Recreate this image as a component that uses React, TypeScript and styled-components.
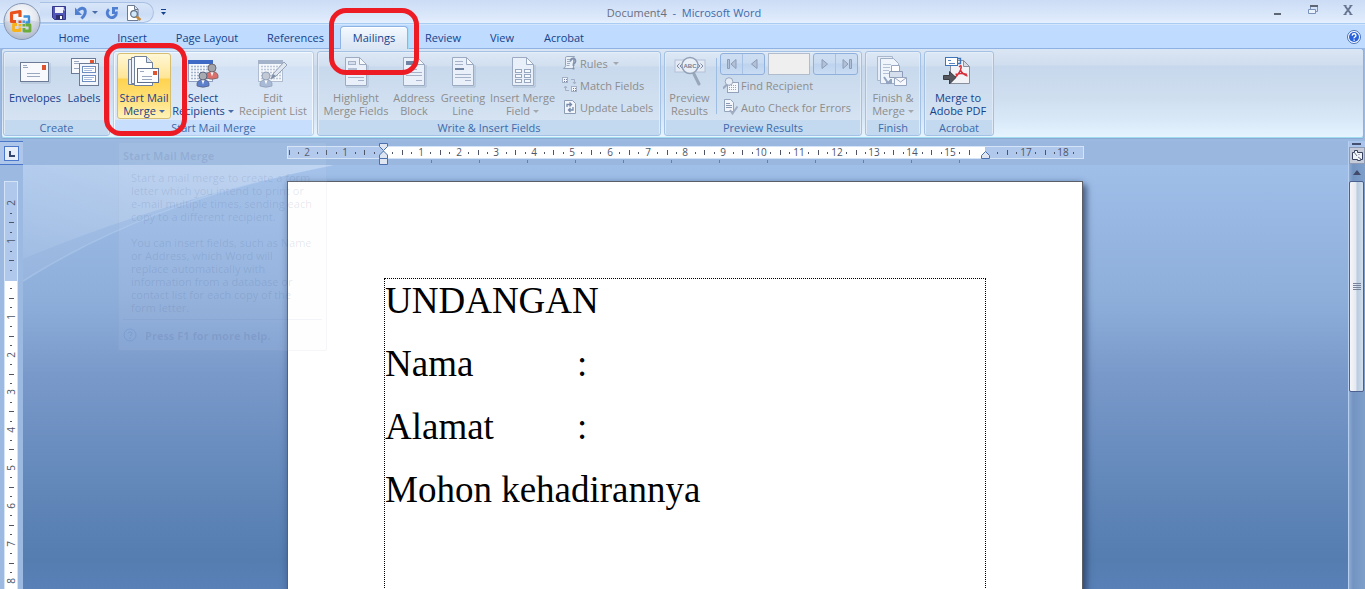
import React from "react";
import styled, { createGlobalStyle, css } from "styled-components";

const UI_FONT = `"Open Sans", "Noto Sans", sans-serif`;

const GlobalStyle = createGlobalStyle`
  *, *::before, *::after { box-sizing: border-box; }
  body { margin: 0; font-family: ${UI_FONT}; font-size: 11px; color: #15428b; overflow: hidden; }
  button, input { font: inherit; color: inherit; }
  button { background: none; border: 0; padding: 0; white-space: nowrap; }
  svg { display: block; }
`;

/* ---------- window frame ---------- */

const Window = styled.div`
  position: relative;
  display: flex;
  flex-direction: column;
  height: 100vh;
  background: #9bb9e1;
`;

const TitleBar = styled.header`
  display: flex;
  align-items: flex-start;
  height: 25px;
  flex: none;
  padding-left: 40px;
  background: linear-gradient(#ccdcf5 0, #d3e2f8 8px, #dfebfc 20px, #e6f1fe 23px);
  border-bottom: 1px solid #d3e6fb;
  box-shadow: inset 0 -1px 0 #a9ccf2;
`;

const QuickAccess = styled.div`
  display: flex;
  align-items: center;
  gap: 6px;
  width: 114px;
  height: 21px;
  margin-top: 2px;
  padding: 0 11px;
  border: 1px solid #a9c1e4;
  border-left: 0;
  border-radius: 0 11px 11px 0;
  background: linear-gradient(#d9e6f9, #cbdcf5 60%, #dce9fb);
`;

const IconButton = styled.button`
  display: flex;
  align-items: center;
  justify-content: center;
`;

const CustomizeButton = styled(IconButton)`
  width: 20px;
  height: 24px;
`;

const Caption = styled.h1`
  flex: 1;
  margin: 0;
  padding-right: 73px;
  text-align: center;
  font-size: 11px;
  font-weight: 400;
  line-height: 26px;
  white-space: pre;
  color: #3e6aaa;
`;

const DocumentName = styled.span`
  color: #696f7d;
`;

const WindowButtons = styled.div`
  display: flex;
  gap: 14px;
  margin: 1px 7px 0 0;
`;

const WindowButton = styled(IconButton)`
  width: 21px;
  height: 18px;
`;

const OfficeButton = styled(IconButton)`
  position: absolute;
  left: 3px;
  top: 3px;
  width: 38px;
  height: 38px;
`;

/* ---------- ribbon tabs ---------- */

const TabRow = styled.nav`
  display: flex;
  align-items: flex-end;
  flex: none;
  height: 23px;
  padding-left: 45px;
  background: #bfdbff;
`;

const Tab = styled.button<{ $width: number; $active?: boolean }>`
  position: relative;
  width: ${(p) => p.$width}px;
  height: 23px;
  padding-top: 2px;
  line-height: 21px;
  text-align: center;
  ${(p) =>
    p.$active &&
    css`
      z-index: 2;
      &::before {
        content: "";
        position: absolute;
        inset: 1px 2px -1px 2px;
        border: 1px solid #8db2e3;
        border-bottom: 0;
        border-radius: 4px 4px 0 0;
        background: linear-gradient(#f4f9ff, #e3ecf7 60%, #dbe6f4);
        box-shadow: inset 0 1px 0 #fff, 1px 0 1px #9fdcf5;
      }
    `}
`;

const TabText = styled.span`
  position: relative;
`;

const HelpButton = styled(IconButton)`
  width: 16px;
  height: 23px;
  margin: 0 3px 0 auto;
`;

const Highlight = styled.span<{ $inset: string }>`
  position: absolute;
  z-index: 5;
  inset: ${(p) => p.$inset};
  border: 5px solid #ed1c24;
  border-radius: 17px;
  pointer-events: none;
`;

/* ---------- ribbon ---------- */

const Ribbon = styled.section`
  display: flex;
  flex: none;
  gap: 3px;
  height: 90px;
  margin: 0 1px;
  padding: 2px 1px;
  border: 1px solid #8db2e3;
  border-bottom-color: #9fdcee;
  border-radius: 3px;
  background: linear-gradient(#dbe6f4 0, #cfddee 16px, #c7d8ed 17px, #cfdeef 48px, #d9e9f8 72px, #e5f4fe 88px);
  box-shadow: 0 1px 0 #8aa9d4;
`;

const GroupBox = styled.section<{ $width: number; $hot?: boolean }>`
  display: flex;
  flex-direction: column;
  flex: none;
  width: ${(p) => p.$width}px;
  height: 85px;
  border: 1px solid ${(p) => (p.$hot ? "#b5cdec" : "#a2c1e4")};
  border-radius: 3px;
  box-shadow: inset 0 0 0 1px ${(p) => (p.$hot ? "#f2f8ff" : "rgba(235, 243, 252, 0.55)")};
  background: ${(p) =>
    p.$hot
      ? "linear-gradient(#e3ecf8 0, #dae6f5 14px, #d2e1f4 15px, #dde9f8 68px)"
      : "linear-gradient(#dde8f5 0, #d1dfef 14px, #c8d9ed 15px, #d5e3f2 68px)"};
`;

const GroupBody = styled.div`
  display: flex;
  flex: 1;
  padding: 1px 0 0 3px;
`;

const GroupTitle = styled.h2<{ $hot?: boolean }>`
  flex: none;
  height: 15px;
  margin: 0 1px;
  font-size: 11px;
  font-weight: 400;
  line-height: 15px;
  text-align: center;
  color: #3e6aaa;
  background: ${(p) => (p.$hot ? "#c7dffc" : "#c2d9f0")};
`;

const LargeButton = styled.button<{ $width: number; $active?: boolean }>`
  position: relative;
  display: flex;
  flex-direction: column;
  align-items: center;
  flex: none;
  width: ${(p) => p.$width}px;
  height: 66px;
  padding-top: 2px;
  border: 1px solid transparent;
  border-radius: 3px;
  line-height: 13px;
  color: #15428b;
  &:disabled { color: #8d8d8d; }
  ${(p) =>
    p.$active &&
    css`
      border-color: #d5bd71;
      background: linear-gradient(#fff7d6 0, #ffe696 24px, #ffd34e 25px, #ffe07a 46px, #fff3b8 64px);
    `}
`;

const LargeLabel = styled.span`
  margin-top: 3px;
  white-space: pre;
`;

const SmallColumn = styled.div<{ $inset?: number }>`
  display: flex;
  flex-direction: column;
  padding-left: ${(p) => p.$inset ?? 0}px;
`;

const SmallButton = styled.button`
  display: flex;
  align-items: center;
  gap: 2px;
  height: 22px;
  padding-bottom: 2px;
  &:disabled { color: #8d8d8d; }
`;

const Arrow = styled.span`
  display: inline-block;
  margin-left: 3px;
  vertical-align: 2px;
  border: 3px solid transparent;
  border-top-color: #4a6ca6;
  border-bottom: 0;
  button:disabled & { border-top-color: #a3a7ae; }
`;

const Divider = styled.div`
  width: 1px;
  height: 56px;
  margin: 5px 3px 0 5px;
  background: #9dbde2;
`;

const RecordBar = styled.div`
  display: flex;
  gap: 3px;
  height: 22px;
`;

const NavPair = styled.div`
  display: flex;
  width: 45px;
  height: 22px;
  border: 1px solid #8fb0dc;
  border-radius: 3px;
  background: linear-gradient(#cfdff2 0, #c9dbf1 9px, #bdd3ee 10px, #c9dcf3);
`;

const NavButton = styled(IconButton)`
  flex: 1;
  & + & { border-left: 1px solid #a8c2e4; }
`;

const RecordInput = styled.input`
  width: 42px;
  height: 22px;
  padding: 0 3px;
  border: 1px solid #b1bdcc;
  background: #efefef;
`;

/* ---------- work area ---------- */

const Workspace = styled.main`
  display: flex;
  flex: 1;
  min-height: 0;
  margin-top: 3px;
`;

const LeftRail = styled.div`
  display: flex;
  flex-direction: column;
  flex: none;
  width: 23px;
  background: #9bb9e1;
`;

const TabSelector = styled.button`
  display: flex;
  align-items: center;
  justify-content: center;
  flex: none;
  width: 24px;
  height: 24px;
  border: 1px solid #4b78ca;
  border-left: 0;
  background: #adc6ea;
`;

const VerticalRuler = styled.div`
  flex: 1;
  min-height: 0;
  margin: 16px 0 0 4px;
  overflow: hidden;
`;

const Center = styled.div`
  display: flex;
  flex-direction: column;
  flex: 1;
  min-width: 0;
`;

const RulerRow = styled.div`
  display: flex;
  justify-content: center;
  flex: none;
  height: 24px;
  background: #9ab8df;
`;

const Desk = styled.div`
  position: relative;
  display: flex;
  justify-content: center;
  flex: 1;
  min-height: 0;
  padding-right: 1px;
  overflow: hidden;
  background: linear-gradient(#9fbfe9 0, #8fafdb 130px, #7999ca 210px, #6489bb 310px, #557db0 395px, #5981b8 424px);
`;

const Swoosh = styled.svg`
  position: absolute;
  left: 0;
  top: 0;
`;

const Paper = styled.article`
  position: relative;
  width: 796px;
  height: 1124px;
  flex: none;
  margin-top: 16px;
  padding: 96px;
  border: 1px solid #5a5f68;
  background: #fff;
  box-shadow: 4px 4px 6px rgba(35, 55, 90, 0.65), -1px 0 6px rgba(35, 55, 90, 0.25);
`;

const TextArea = styled.div`
  height: 930px;
  border: 1px dotted #000;
`;

const Line = styled.p`
  margin: 0;
  height: 63px;
  font-family: "Liberation Serif", "Times New Roman", serif;
  font-size: 37px;
  line-height: 44px;
  color: #000;
  white-space: pre;
  tab-size: 192px;
`;

const RightRail = styled.div`
  display: flex;
  flex-direction: column;
  flex: none;
  width: 17px;
  border-left: 1px solid #b7d0f2;
  background: linear-gradient(90deg, #8daad2, #7394c1 4px, #7f9fcb);
`;

const SplitHandle = styled.div`
  flex: none;
  height: 6px;
  padding: 2px 3px;
  background: #a9c5ee;
  &::before { content: ""; display: block; width: 9px; height: 2px; background: #44506e; }
`;

const RulerToggle = styled(IconButton)`
  flex: none;
  height: 17px;
  border: 1px solid #8f9bb5;
  background: #c5cbd9;
`;

const ScrollUp = styled(IconButton)`
  flex: none;
  height: 17px;
`;

const ScrollThumb = styled.div`
  display: flex;
  align-items: center;
  justify-content: center;
  flex: none;
  width: 15px;
  height: 211px;
  border: 1px solid #4c5f91;
  border-radius: 2px;
  background: linear-gradient(90deg, #f6f6fa, #e4e8f0 6px, #b9cbe0 7px, #d3e0ee);
`;

/* ---------- fading screen tip ---------- */

const ScreenTip = styled.aside`
  position: absolute;
  z-index: 3;
  left: 118px;
  top: 142px;
  width: 209px;
  height: 209px;
  padding: 6px 4px 0 4px;
  border: 1px solid rgba(90, 110, 150, 0.06);
  border-radius: 2px;
  background: rgba(240, 245, 255, 0.07);
  line-height: 13px;
  color: rgba(50, 70, 120, 0.13);
  pointer-events: none;
`;

const TipTitle = styled.strong`
  display: block;
  margin-bottom: 9px;
`;

const TipText = styled.p`
  margin: 0 0 13px 8px;
  white-space: pre;
`;

const TipFooter = styled.div`
  display: flex;
  align-items: center;
  gap: 8px;
  margin-top: -8px;
  padding-top: 8px;
  border-top: 1px solid rgba(60, 90, 150, 0.06);
  font-weight: 700;
`;

/* ---------- icons ---------- */

const Icon = ({ size = 32, box = size, children }: { size?: number; box?: number; children: React.ReactNode }) => (
  <svg width={size} height={size} viewBox={`0 0 ${box} ${box}`} aria-hidden="true">
    {children}
  </svg>
);

const OfficeLogo = () => (
  <svg width="38" height="38" viewBox="0 0 38 38" aria-hidden="true">
    <defs>
      <radialGradient id="orb" cx="50%" cy="35%" r="65%">
        <stop offset="0" stopColor="#ffffff" />
        <stop offset="0.6" stopColor="#e4e8ef" />
        <stop offset="1" stopColor="#a9b4c6" />
      </radialGradient>
    </defs>
    <circle cx="19" cy="18.5" r="18" fill="url(#orb)" stroke="#8496b4" />
    <path d="M2 19 A17 17 0 0 0 36 19 Q19 14 2 19Z" fill="#b8c2d2" opacity="0.45" />
    <g fill="none" strokeLinejoin="round">
      <path d="M13 18.500H8.500V10L17 8.500V14" stroke="#e8511a" strokeWidth="3.200" />
      <path d="M20.500 13.500H26V19.500H22.500" stroke="#3f8fd8" strokeWidth="2.400" />
      <path d="M14 21.500H10.500V27.500H17V24.500" stroke="#f8b21c" strokeWidth="2.800" />
      <path d="M22.500 22H27V28H21V25" stroke="#6cac3c" strokeWidth="2.800" />
    </g>
    <path d="M15.500 17.500h3v2.500h-3z" fill="#d8502a" />
    <path d="M19.500 17.500h2.500v2.500h-2.500z" fill="#4d9be0" />
    <path d="M15.500 21h3v2.500h-3z" fill="#f8b21c" />
    <path d="M19.500 21h2.500v2.500h-2.500z" fill="#6cac3c" />
  </svg>
);

const SaveIcon = () => (
  <Icon size={16}>
    <path d="M1.500 1.500h13v13h-11l-2-2z" fill="#5157b8" stroke="#34388c" />
    <path d="M4 2h8v6H4z" fill="#eef1fb" />
    <path d="M12.500 2v3h1.500" fill="none" stroke="#c9cdf2" />
    <path d="M5 10h7v4.500H5z" fill="#2e3170" />
    <path d="M9 11h2v3H9z" fill="#fff" />
  </Icon>
);

const UndoIcon = () => (
  <Icon size={16}>
    <path d="M5 5.500Q9.500 1.500 11.800 4.500Q13.800 8.500 8.500 13.500" fill="none" stroke="#4f7fd0" strokeWidth="3" />
    <path d="M2 2.500v7.500h7z" fill="#4f7fd0" />
  </Icon>
);

const RedoIcon = () => (
  <Icon size={16}>
    <path d="M5 4.500A4.500 4.500 0 1 0 12 6.500" fill="none" stroke="#4f7fd0" strokeWidth="3" />
    <path d="M8 2h6v2.500h-3V9H8z" fill="#4f7fd0" />
  </Icon>
);

const PreviewIcon = () => (
  <Icon size={16}>
    <path d="M1.500 .5h7l3.500 3.500v11.500H1.500z" fill="#fff" stroke="#6d7a90" />
    <path d="M8.500 .5v4h3.500" fill="#d9e2ee" stroke="#6d7a90" />
    <circle cx="8" cy="9" r="3.300" fill="#d2e7f7" stroke="#5d6c84" strokeWidth="1.200" />
    <path d="M10.500 11.500l4 3.500" stroke="#c5893a" strokeWidth="2.400" />
  </Icon>
);

const HelpIcon = ({ size = 14 }: { size?: number }) => (
  <Icon size={size} box={14}>
    <circle cx="7" cy="7" r="6.500" fill="#fff" stroke="#4870b4" />
    <circle cx="7" cy="7" r="5" fill="#2863dc" />
    <path d="M5.200 5.600Q5.300 3.800 7.100 3.800T8.900 5.500Q8.900 6.400 7.900 7T7.100 8.400M7.100 9.400v1.400" fill="none" stroke="#fff" strokeWidth="1.400" />
  </Icon>
);

const EnvelopeIcon = () => (
  <Icon>
    <path d="M2 27h29V7" fill="none" stroke="#9aa8bd" opacity="0.6" />
    <rect x="1.500" y="6.500" width="28" height="19" fill="#f7f9fd" stroke="#6b7b95" />
    <path d="M4 9.500h4M4 11.500h5M8 17.500h13M8 20.500h13" stroke="#9aa8bf" />
    <rect x="23" y="9" width="4" height="5" fill="#e0532f" />
  </Icon>
);

const LabelsIcon = () => (
  <Icon>
    <rect x="3.500" y="2.500" width="24" height="15" fill="#f7f9fd" stroke="#6b7b95" />
    <path d="M6 5.500h5M6 7.500h5M6 12.500h5" stroke="#9aa8bf" />
    <rect x="22" y="4" width="4" height="4" fill="#e0532f" />
    <rect x="11.500" y="7.500" width="19" height="22" fill="#f2f6fc" stroke="#6b7b95" />
    <rect x="14.500" y="10.500" width="13" height="6" fill="#fff" stroke="#6f8cc0" />
    <rect x="14.500" y="19.500" width="13" height="6" fill="#fff" stroke="#6f8cc0" />
    <path d="M16 12.500h10M16 14.500h8M16 21.500h10M16 23.500h8" stroke="#a9bbdc" />
  </Icon>
);

const MailMergeIcon = () => (
  <Icon>
    <path d="M.5 3.500h14v25H.5z" fill="#eaf0f9" stroke="#71809b" />
    <path d="M3.500 1.500h14v26h-14z" fill="#f1f5fb" stroke="#71809b" />
    <path d="M6.500 .5h12l6 6v23h-18z" fill="#fff" stroke="#71809b" />
    <path d="M18.500 .5v6h6" fill="#dce4f0" stroke="#71809b" />
    <rect x="9.500" y="12.500" width="21" height="14" fill="#fbfcfe" stroke="#5e708e" />
    <path d="M12 15.500h4M14 20.500h10M14 23.500h10" stroke="#9aa8bf" />
    <rect x="25" y="15" width="4" height="4" fill="#e0532f" />
  </Icon>
);

const Grid = ({ header, dots, edge }: { header: string; dots: string; edge: string }) => (
  <>
    <rect x="1.500" y="4.500" width="24" height="21" fill="#f4f7fc" stroke={edge} />
    <path d="M1 4h25v4H1z" fill={header} />
    <path
      d="M4 10.500h20M4 13.500h20M4 16.500h20M4 19.500h20M4 22.500h20"
      stroke={dots}
      strokeWidth="1.500"
      strokeDasharray="2 1"
    />
  </>
);

const Person = ({ x, y, body, head, edge = "#4b5675" }: { x: number; y: number; body: string; head: string; edge?: string }) => (
  <g transform={`translate(${x} ${y})`}>
    <path d="M-6 10V7Q-5 3.500 0 3.500T6 7V10Q0 12.500-6 10Z" fill={body} stroke={edge} strokeWidth="0.700" />
    <path d="M-1.500 4L0 8.500L1.500 4Z" fill="#fff" />
    <circle cx="0" cy="0" r="4" fill={head} stroke={edge} strokeWidth="0.900" />
  </g>
);

const RecipientsIcon = () => (
  <Icon>
    <Grid header="#3f6bc6" dots="#a5b4cf" edge="#8fa2c2" />
    <Person x={25} y={12} body="#d9706c" head="#a3a5ab" edge="#6a6168" />
    <Person x={16} y={20} body="#5d80cc" head="#a7aab1" edge="#545d78" />
  </Icon>
);

const EditRecipientsIcon = () => (
  <Icon>
    <Grid header="#a5b3ca" dots="#bcc7d9" edge="#b0bccf" />
    <Person x={9} y={20} body="#a9bad6" head="#c3cad6" edge="#8c9bb4" />
    <path d="M14 23l2-5L27 6l3 3L19 20z" fill="#dfe6f0" stroke="#93a2ba" />
    <path d="M14 23l2-5 3 2z" fill="#7f8da5" />
  </Icon>
);

const Sheet = ({ children }: { children: React.ReactNode }) => (
  <Icon>
    <path d="M6 31h22V9" fill="none" stroke="#a4b3ca" opacity="0.7" />
    <path d="M5.500 1.500h14l7 7v21h-21z" fill="#e9f0f9" stroke="#9dabc2" />
    <path d="M19.500 1.500v7h7z" fill="#f7fafd" stroke="#9dabc2" />
    {children}
  </Icon>
);

const HighlightFieldsIcon = () => (
  <Sheet>
    <rect x="8.500" y="5.500" width="7" height="3" fill="#d4deec" stroke="#a5b2c8" />
    <rect x="8" y="12" width="9" height="3" fill="#b2bfd3" />
    <path d="M8 18.500h11M8 21.500h16M18 24.500h6" stroke="#a5b2c8" />
  </Sheet>
);

const AddressBlockIcon = () => (
  <Sheet>
    <path d="M8 5h9v4H8z" fill="#7183a3" />
    <path d="M8 13.500h11M8 16.500h16M8 19.500h16M18 24.500h6" stroke="#a5b2c8" />
  </Sheet>
);

const GreetingIcon = () => (
  <Sheet>
    <path d="M8 5.500h8M8 8.500h8M8 18.500h16M8 21.500h16M18 24.500h6" stroke="#a5b2c8" />
    <path d="M8 12h9v2H8z" fill="#7183a3" />
  </Sheet>
);

const InsertFieldIcon = () => (
  <Sheet>
    {[13, 18, 23].map((y) => (
      <g key={y} fill="#f5f8fc" stroke="#98a7c0">
        <rect x="8.500" y={y + 0.5} width="6" height="3" />
        <rect x="17.500" y={y + 0.5} width="6" height="3" />
      </g>
    ))}
  </Sheet>
);

const RulesIcon = () => (
  <Icon size={16}>
    <path d="M4.500 1.500h8q-1 1-1 3v9H1.500q2-.500 2-3v-7q0-2 1-2z" fill="#eaf0f8" stroke="#93a2bb" />
    <path d="M5 4.500h4M5 6.500h4M5 8.500h3M4.500 10.500h3" stroke="#9fadc3" />
    <path d="M8.500 6Q9 3.500 11 3.500T13.500 6Q13.500 7.500 11.500 9V11M11.500 12.500v2" fill="none" stroke="#8292ad" strokeWidth="1.800" />
  </Icon>
);

const MatchIcon = () => (
  <Icon size={16}>
    <rect x=".5" y=".5" width="5" height="5" fill="#f2f6fb" stroke="#a3b0c6" />
    <rect x="9.500" y="9.500" width="5" height="5" fill="#f2f6fb" stroke="#a3b0c6" />
    <path d="M2 2.500h1M4 2.500h1M2 4.500h1M4 4.500h1M11 11.500h1M13 11.500h1M11 13.500h1M13 13.500h1" stroke="#71819e" />
    <path d="M9 2.500h3.500v4M11 5l1.500 2L14 5M7 13.500H3.500v-4M2 11l1.500-2L5 11" fill="none" stroke="#a3b0c6" />
  </Icon>
);

const UpdateIcon = () => (
  <Icon size={16}>
    <path d="M2.500 1.500h8l3 3v10h-11z" fill="#f2f6fb" stroke="#8e9db6" />
    <path d="M5 8V5.500h4M7.500 3.500l2 2-2 2M11 8v3H7M8.500 9l-2 2 2 2" fill="none" stroke="#7689ab" strokeWidth="1.300" />
  </Icon>
);

const PreviewResultsIcon = () => (
  <Icon>
    <rect x="1" y="4" width="30" height="12" fill="#e3eaf4" stroke="#b3c0d5" />
    <path d="M5.500 7.500l-2.500 2.500 2.500 2.500M8.500 7.500L6 10l2.500 2.500M26.500 7.500l2.500 2.500-2.500 2.500M23.500 7.500l2.500 2.500-2.500 2.500" fill="none" stroke="#7e8ca5" />
    <path d="M20 18l5 10" stroke="#9aa7bb" strokeWidth="3" strokeLinecap="round" />
    <circle cx="16" cy="9.500" r="8" fill="#e9eff7" stroke="#92a0b7" strokeWidth="1.500" />
    <text x="16" y="12" textAnchor="middle" fontSize="6" fontFamily="Liberation Sans" fontWeight="700" fill="#727f96">ABC</text>
  </Icon>
);

const FindIcon = () => (
  <Icon size={16}>
    <rect x="4.500" y="5.500" width="11" height="10" fill="#f4f7fb" stroke="#93a2bb" />
    <path d="M6 8.500h8M6 10.500h8M6 12.500h8" stroke="#98a6bf" strokeDasharray="1 1" />
    <circle cx="6" cy="4.500" r="3.800" fill="#e6edf6" stroke="#9aa7bd" />
    <path d="M4 7.500l-4 4" stroke="#9aa7bd" strokeWidth="2" />
  </Icon>
);

const CheckIcon = () => (
  <Icon size={16}>
    <path d="M1.500 .5h6l3 3v9h-9z" fill="#f2f6fb" stroke="#95a4bd" />
    <path d="M3 4.500h4M3 6.500h6M3 8.500h6" stroke="#8a99b3" />
    <path d="M7 11l2.500 3.500 5-7" fill="none" stroke="#a0adc2" strokeWidth="2" />
  </Icon>
);

const FinishIcon = () => (
  <Icon>
    <path d="M.5 .5h15v24H.5z" fill="#e6edf7" stroke="#a9b7cd" />
    <path d="M3.500 2.500h13l5 5v20h-18z" fill="#f0f5fb" stroke="#a0afc7" />
    <path d="M6 8.500h8M6 11.500h7M6 14.500h6M6 17.500h6" stroke="#b4c0d3" />
    <path d="M14.500 9.500h8v6h-8z" fill="#fff" stroke="#99a8c0" />
    <path d="M12.500 15.500h13v6h-13z" fill="#d5dfed" stroke="#8c9cb7" />
    <path d="M7 21l4 6 3-3M9 27h5v-4" fill="none" stroke="#93a4c1" strokeWidth="2" />
    <path d="M17.500 21.500h12v8h-12z" fill="#f7f9fc" stroke="#97a6bf" />
    <path d="M18 22l5.500 4 5.500-4" fill="none" stroke="#97a6bf" />
  </Icon>
);

const AdobeIcon = () => (
  <Icon>
    <path d="M8.500 4.500h13l6 6v17h-19z" fill="#f2f3f7" stroke="#8a8f9c" />
    <path d="M21.500 4.500v6h6z" fill="#d8dbe4" stroke="#8a8f9c" />
    <path d="M17 11Q20.500 7.500 18.500 14Q16 20 11 22.500M18.500 14Q21 19 25.500 20M13.500 18.500Q19 16.500 25 18.500" fill="none" stroke="#d8303a" strokeWidth="1.500" />
    <rect x="3.500" y="1.500" width="12" height="8" fill="#fff" stroke="#3f74b8" />
    <path d="M6 4.500h3M7 7.500h6" stroke="#5c84bf" />
    <path d="M16 2.500h2.500v5H16" fill="none" stroke="#3f74b8" strokeWidth="1.400" />
    <path d="M1.500 19.500h6v-4l6.500 6-6.500 6.500v-4.500h-6z" fill="#54575d" stroke="#3b3d42" />
  </Icon>
);

const NavIcon = ({ kind }: { kind: "first" | "prev" | "next" | "last" }) => {
  const flip = kind === "next" || kind === "last";
  const bar = kind === "first" || kind === "last";
  return (
    <svg width="14" height="14" viewBox="0 0 14 14" aria-hidden="true">
      <g transform={flip ? "matrix(-1 0 0 1 14 0)" : undefined} fill="#b3c1d6" stroke="#8c9cb8">
        {bar && <path d="M2.500 2.500h2v9h-2z" />}
        <path d={bar ? "M11 2.500v9L6 7z" : "M10 2.500v9L4.500 7z"} />
      </g>
    </svg>
  );
};

const TipHelpIcon = () => (
  <Icon size={14}>
    <circle cx="7" cy="7" r="6" fill="none" stroke="#5a86cc" opacity="0.3" />
    <path d="M5 5.500Q5.200 4 7 4T9 5.600Q9 6.500 7 7.800M7 9.500v1.500" fill="none" stroke="#5a86cc" opacity="0.35" />
  </Icon>
);

/* ---------- rulers ---------- */

const CM = 37.8;
const INK = "#4e5566";

const quarters = (from: number, to: number) => {
  const list: number[] = [];
  for (let q = from; q <= to; q += 1) if (q !== 0) list.push(q);
  return list;
};

const HorizontalScale = () => (
  <svg width="797" height="24" viewBox="0 0 797 24" fontFamily="Open Sans" fontSize="10" fill={INK} aria-hidden="true">
    <rect x=".5" y="5.500" width="796" height="12" fill="#b0c8ec" stroke="#d5e3f6" />
    <path d="M96 6h602v11H96z" fill="#fff" />
    {quarters(-10, 73).map((q) => {
      const x = Math.round(96 + (q / 4) * CM);
      if (q === 64 || q === 63) return null;
      if (q % 4 === 0)
        return (
          <text key={q} x={x} y="15" textAnchor="middle">
            {Math.abs(q / 4)}
          </text>
        );
      return q % 2 === 0 ? (
        <rect key={q} x={x} y="9" width="1" height="5" />
      ) : (
        <rect key={q} x={x} y="11" width="1" height="2" />
      );
    })}
    {Array.from({ length: 12 }, (_, i) => (
      <rect key={i} x={144 + i * 48} y="19" width="1" height="3" fill="#6d7f9c" />
    ))}
    <g fill="#dfe6f1" stroke="#4c70ad">
      <path d="M92.500 2.500h8v3l-4 4-4-4z" />
      <path d="M92.500 17.500v-3.500l4-4 4 4v3.500z" />
      <path d="M92.500 17.500h8v6h-8z" />
      <path d="M694.500 17.500v-3l4-4 4 4v3z" />
    </g>
  </svg>
);

const VerticalScale = () => {
  const visible = window.innerHeight - 284;
  const last = Math.floor((visible / CM) * 4);
  return (
    <svg width="14" height="1124" viewBox="0 0 14 1124" fontFamily="Open Sans" fontSize="10" fill={INK} aria-hidden="true">
      <rect x=".5" y=".5" width="13" height="1123" fill="#fff" stroke="#d5e3f6" />
      <path d="M1 1h12v99H1z" fill="#b0c8ec" />
      {quarters(-8, last).map((q) => {
        const y = Math.round(98 + (q / 4) * CM);
        if (q % 4 === 0)
          return (
            <text key={q} transform={`translate(11 ${y}) rotate(-90)`} textAnchor="middle">
              {Math.abs(q / 4)}
            </text>
          );
        return q % 2 === 0 ? (
          <rect key={q} x="5" y={y} width="5" height="1" />
        ) : (
          <rect key={q} x="6" y={y} width="2" height="1" />
        );
      })}
    </svg>
  );
};

/* ---------- composed parts ---------- */

interface GroupProps {
  title: string;
  width: number;
  hot?: boolean;
  children: React.ReactNode;
}

const Group = ({ title, width, hot, children }: GroupProps) => (
  <GroupBox $width={width} $hot={hot} aria-label={title}>
    <GroupBody>{children}</GroupBody>
    <GroupTitle $hot={hot}>{title}</GroupTitle>
  </GroupBox>
);

interface CommandProps {
  icon: React.ReactNode;
  label: string;
  width: number;
  menu?: boolean;
  disabled?: boolean;
  active?: boolean;
  children?: React.ReactNode;
}

const Command = ({ icon, label, width, menu, disabled, active, children }: CommandProps) => (
  <LargeButton $width={width} $active={active} disabled={disabled}>
    {icon}
    <LargeLabel>
      {label}
      {menu && <Arrow />}
    </LargeLabel>
    {children}
  </LargeButton>
);

const TABS: [string, number][] = [
  ["Home", 58],
  ["Insert", 58],
  ["Page Layout", 92],
  ["References", 85],
  ["Mailings", 72],
  ["Review", 66],
  ["View", 52],
  ["Acrobat", 72],
];

export default function App() {
  return (
    <Window>
      <GlobalStyle />
      <TitleBar>
        <QuickAccess>
          <IconButton aria-label="Save"><SaveIcon /></IconButton>
          <IconButton aria-label="Undo"><UndoIcon /><Arrow /></IconButton>
          <IconButton aria-label="Redo"><RedoIcon /></IconButton>
          <IconButton aria-label="Print Preview"><PreviewIcon /></IconButton>
        </QuickAccess>
        <CustomizeButton aria-label="Customize Quick Access Toolbar">
          <Icon size={8}>
            <path d="M1 1.500h5" stroke="#15428b" />
            <path d="M1 4h5L3.500 7z" fill="#15428b" />
          </Icon>
        </CustomizeButton>
        <Caption>
          <DocumentName>Document4</DocumentName>{"  -  Microsoft Word"}
        </Caption>
        <WindowButtons>
          <WindowButton aria-label="Minimize">
            <Icon size={12}><path d="M2 9h7v2H2z" fill="#5f6673" /></Icon>
          </WindowButton>
          <WindowButton aria-label="Restore">
            <Icon size={12}>
              <path d="M3.500 5V2.500h7v5H9" fill="none" stroke="#7b93b8" />
              <path d="M3 2h8" stroke="#5f6673" strokeWidth="2" />
              <path d="M1.500 5.500h7v4h-7z" fill="#eaf2fd" stroke="#7b93b8" />
            </Icon>
          </WindowButton>
          <WindowButton aria-label="Close">
            <Icon size={12}>
              <path d="M3 2l6 8M9 2l-6 8" stroke="#66758f" strokeWidth="2" />
              <path d="M1.500 1.500h3M7.500 1.500h3M1.500 10.500h3M7.500 10.500h3" stroke="#66758f" />
            </Icon>
          </WindowButton>
        </WindowButtons>
      </TitleBar>

      <TabRow>
        {TABS.map(([name, width]) => (
          <Tab key={name} $width={width} $active={name === "Mailings"}>
            <TabText>{name}</TabText>
            {name === "Mailings" && <Highlight $inset="-17px -9px -27px -9px" />}
          </Tab>
        ))}
        <HelpButton aria-label="Help"><HelpIcon /></HelpButton>
      </TabRow>
      <OfficeButton aria-label="Office Button"><OfficeLogo /></OfficeButton>

      <Ribbon>
        <Group title="Create" width={107}>
          <Command icon={<EnvelopeIcon />} label="Envelopes" width={56} />
          <Command icon={<LabelsIcon />} label="Labels" width={42} />
        </Group>
        <Group title="Start Mail Merge" width={201} hot>
          <Command icon={<MailMergeIcon />} label={"Start Mail\nMerge"} width={54} menu active>
            <Highlight $inset="-11px -17px -18px -14px" />
          </Command>
          <Command icon={<RecipientsIcon />} label={"Select\nRecipients"} width={64} menu />
          <Command icon={<EditRecipientsIcon />} label={"Edit\nRecipient List"} width={76} disabled />
        </Group>
        <Group title="Write & Insert Fields" width={344}>
          <Command icon={<HighlightFieldsIcon />} label={"Highlight\nMerge Fields"} width={70} disabled />
          <Command icon={<AddressBlockIcon />} label={"Address\nBlock"} width={46} disabled />
          <Command icon={<GreetingIcon />} label={"Greeting\nLine"} width={52} disabled />
          <Command icon={<InsertFieldIcon />} label={"Insert Merge\nField"} width={67} menu disabled />
          <SmallColumn $inset={6}>
            <SmallButton disabled><RulesIcon />Rules<Arrow /></SmallButton>
            <SmallButton disabled><MatchIcon />Match Fields</SmallButton>
            <SmallButton disabled><UpdateIcon />Update Labels</SmallButton>
          </SmallColumn>
        </Group>
        <Group title="Preview Results" width={198}>
          <Command icon={<PreviewResultsIcon />} label={"Preview\nResults"} width={43} disabled />
          <Divider />
          <SmallColumn>
            <RecordBar>
              <NavPair>
                <NavButton aria-label="First Record" disabled><NavIcon kind="first" /></NavButton>
                <NavButton aria-label="Previous Record" disabled><NavIcon kind="prev" /></NavButton>
              </NavPair>
              <RecordInput aria-label="Go to Record" disabled />
              <NavPair>
                <NavButton aria-label="Next Record" disabled><NavIcon kind="next" /></NavButton>
                <NavButton aria-label="Last Record" disabled><NavIcon kind="last" /></NavButton>
              </NavPair>
            </RecordBar>
            <SmallColumn $inset={3}>
              <SmallButton disabled><FindIcon />Find Recipient</SmallButton>
              <SmallButton disabled><CheckIcon />Auto Check for Errors</SmallButton>
            </SmallColumn>
          </SmallColumn>
        </Group>
        <Group title="Finish" width={56}>
          <Command icon={<FinishIcon />} label={"Finish &\nMerge"} width={48} menu disabled />
        </Group>
        <Group title="Acrobat" width={70}>
          <Command icon={<AdobeIcon />} label={"Merge to\nAdobe PDF"} width={60} />
        </Group>
      </Ribbon>

      <Workspace>
        <LeftRail>
          <TabSelector aria-label="Left Tab">
            <Icon size={15}>
              <rect x=".5" y=".5" width="14" height="14" fill="#e6eefa" stroke="#4b78ca" />
              <path d="M5 5h2v4h4v2H5z" fill="#33466f" />
            </Icon>
          </TabSelector>
          <VerticalRuler><VerticalScale /></VerticalRuler>
        </LeftRail>
        <Center>
          <RulerRow><HorizontalScale /></RulerRow>
          <Desk>
            <Swoosh width="310" height="118" viewBox="0 0 310 118" aria-hidden="true">
              <defs>
                <linearGradient id="sheen" x1="0" y1="1" x2="1" y2="0">
                  <stop offset="0" stopColor="#fff" stopOpacity="0.12" />
                  <stop offset="1" stopColor="#fff" stopOpacity="0.32" />
                </linearGradient>
              </defs>
              <path d="M0 0H310Q150 32 0 94Z" fill="url(#sheen)" />
              <path d="M0 94Q150 32 310 0Q130 34 0 116Z" fill="#fff" opacity="0.06" />
              <path d="M0 116Q130 34 310 0" fill="none" stroke="#c3dbf7" strokeWidth="1.500" opacity="0.3" />
            </Swoosh>
            <Paper>
              <TextArea>
                <Line>UNDANGAN</Line>
                <Line>{"Nama\t:"}</Line>
                <Line>{"Alamat\t:"}</Line>
                <Line>Mohon kehadirannya</Line>
              </TextArea>
            </Paper>
          </Desk>
        </Center>
        <RightRail>
          <SplitHandle />
          <RulerToggle aria-label="View Ruler">
            <Icon size={13}>
              <path d="M1.500 3.500h2v-2h3v2h5v7h-2v1h-3v-1h-5z" fill="#f3f4f8" stroke="#36425e" />
              <path d="M3 3l3 4M7 8l3 2M8 5v1" stroke="#6c7690" />
            </Icon>
          </RulerToggle>
          <ScrollUp aria-label="Scroll Up">
            <Icon size={10}><path d="M1 7h8L5 2z" fill="#414a6a" /></Icon>
          </ScrollUp>
          <ScrollThumb>
            <Icon size={8}><path d="M0 .5h8M0 2.500h8M0 4.500h8M0 6.500h8" stroke="#77839a" /></Icon>
          </ScrollThumb>
        </RightRail>
      </Workspace>

      <ScreenTip>
        <TipTitle>Start Mail Merge</TipTitle>
        <TipText>{"Start a mail merge to create a form\nletter which you intend to print or\ne-mail multiple times, sending each\ncopy to a different recipient."}</TipText>
        <TipText>{"You can insert fields, such as Name\nor Address, which Word will\nreplace automatically with\ninformation from a database or\ncontact list for each copy of the\nform letter."}</TipText>
        <TipFooter><TipHelpIcon />Press F1 for more help.</TipFooter>
      </ScreenTip>
    </Window>
  );
}
